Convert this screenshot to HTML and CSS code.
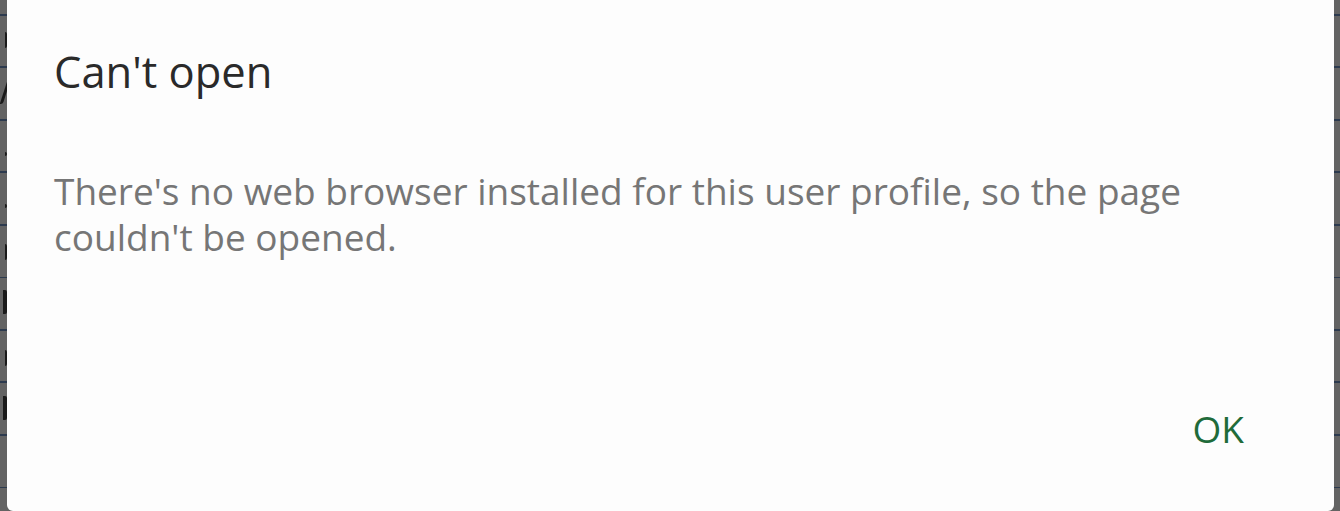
FILE: index.html
```html
<!DOCTYPE html>
<html lang="en">
<head>
<meta charset="utf-8">
<title>Can't open</title>
<link rel="stylesheet" href="styles.css">
</head>
<body>
<div class="screen">
  <div class="backdrop backdrop-left" aria-hidden="true">
    <i class="mark mark-round"></i>
    <i class="mark mark-slash"></i>
    <i class="mark mark-dot"></i>
    <i class="mark mark-dot"></i>
    <i class="mark mark-round"></i>
    <i class="mark mark-stem"></i>
    <i class="mark mark-round"></i>
    <i class="mark mark-stem"></i>
  </div>
  <div class="dialog" role="alertdialog" aria-labelledby="dlg-title">
    <h1 class="dialog-title" id="dlg-title">Can't open</h1>
    <p class="dialog-body">There's no web browser installed for this user profile, so the page couldn't be opened.</p>
    <div class="dialog-actions">
      <button class="dialog-btn" type="button">OK</button>
    </div>
  </div>
  <div class="backdrop backdrop-right"></div>
</div>
</body>
</html>
```
FILE: styles.css
```css
html, body {
  margin: 0;
  padding: 0;
  height: 100%;
  background: #626262;
}

.screen {
  display: flex;
  width: 1340px;
  height: 511px;
  overflow: hidden;
  font-family: "Open Sans", "Noto Sans", sans-serif;
}

/* dimmed list behind the dialog: grey with thin row dividers */
.backdrop {
  background-color: #636363;
  background-image: repeating-linear-gradient(
    to bottom,
    transparent 0,
    transparent 14px,
    #2c3a4e 14px,
    #2c3a4e 16px,
    transparent 16px,
    transparent 52.5px
  );
}

.backdrop-left {
  width: 7px;
  flex: none;
  overflow: hidden;
  display: flex;
  flex-direction: column;
  align-items: flex-end;
  padding-top: 26px;
  gap: 30px;
}

/* edge of the row labels peeking out beside the dialog */
.mark {
  display: block;
  width: 3px;
  height: 22px;
  background: #1a1a1a;
  border-radius: 0 2px 2px 0;
}

.mark-round {
  width: 2px;
  height: 16px;
  margin-top: 6px;
}

.mark-slash {
  width: 3px;
  height: 26px;
  transform: skewX(-18deg);
}

.mark-dot {
  width: 2px;
  height: 4px;
  margin-top: 18px;
}

.mark-stem {
  width: 4px;
  height: 24px;
}

.backdrop-right {
  width: 6px;
  flex: none;
}

.dialog {
  flex: 1;
  background: #fdfdfd;
  border-radius: 0 0 6px 6px;
  padding: 0 0 0 47px;
  display: flex;
  flex-direction: column;
}

.dialog-title {
  margin: 44px 0 0;
  font-weight: 400;
  font-size: 43.5px;
  line-height: 56px;
  color: #2a2a2a;
}

.dialog-body {
  margin: 68px 0 0;
  font-size: 37px;
  line-height: 46px;
  color: #767676;
  max-width: 1180px;
}

.dialog-actions {
  display: flex;
  justify-content: flex-end;
  margin-top: 146px;
  padding-right: 90px;
}

.dialog-btn {
  border: 0;
  background: none;
  padding: 0;
  font-family: inherit;
  font-size: 37px;
  line-height: 46px;
  color: #1f6b3a;
}
```
